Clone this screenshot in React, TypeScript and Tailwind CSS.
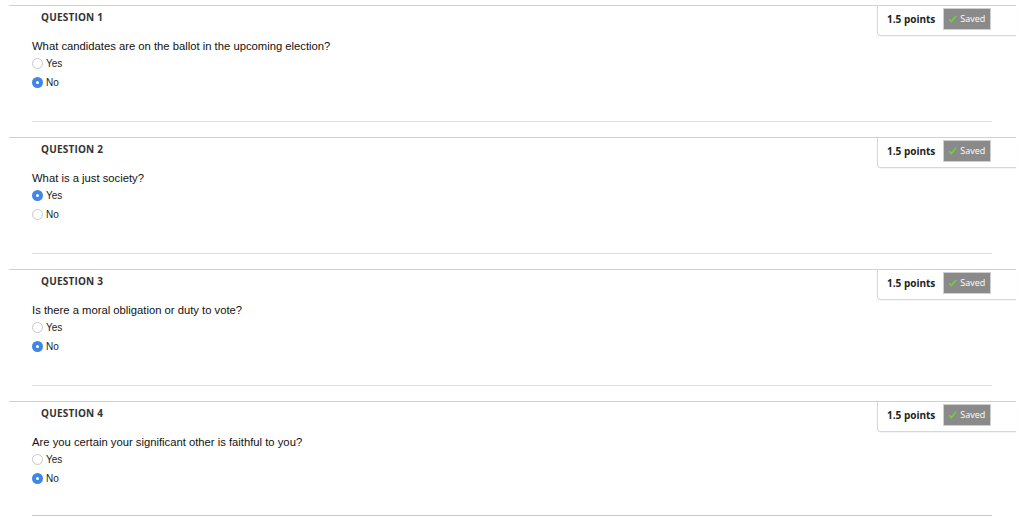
import React from "react";

interface Question {
  num: number;
  text: string;
  answer: "Yes" | "No";
}

const questions: Question[] = [
  { num: 1, text: "What candidates are on the ballot in the upcoming election?", answer: "No" },
  { num: 2, text: "What is a just society?", answer: "Yes" },
  { num: 3, text: "Is there a moral obligation or duty to vote?", answer: "No" },
  { num: 4, text: "Are you certain your significant other is faithful to you?", answer: "No" },
];

const Radio: React.FC<{ checked: boolean }> = ({ checked }) =>
  checked ? (
    <span className="w-[11px] h-[11px] rounded-full bg-[#3f86e8] flex items-center justify-center">
      <span className="w-[3px] h-[3px] rounded-full bg-white" />
    </span>
  ) : (
    <span className="w-[11px] h-[11px] rounded-full border border-[#c9c9c9] bg-white" />
  );

const Check = () => (
  <svg width="9" height="8" viewBox="0 0 9 8">
    <path d="M1 4.2 L3.3 6.5 L8 1" fill="none" stroke="#6fd13a" strokeWidth="1.6" />
  </svg>
);

const QuestionBlock: React.FC<{ q: Question; last?: boolean }> = ({ q, last }) => (
  <div className="border-t border-[#d0d0d0]">
    <div className="flex justify-between h-[30px]">
      <div
        className="pl-[32px] pt-[5px] text-[10px] leading-[12px] font-bold text-[#333] tracking-[0.2px]"
        style={{ fontFamily: '"Open Sans", sans-serif' }}
      >
        QUESTION {q.num}
      </div>
      <div className="w-[139px] h-[30px] border-l border-b border-[#d8d8d8] rounded-bl-[4px] flex items-center pl-[9px] gap-[8px] pb-[3px] shadow-[0_1px_1px_rgba(0,0,0,0.04)]">
        <span
          className="text-[10px] font-bold text-[#222]"
          style={{ fontFamily: '"Open Sans", sans-serif' }}
        >
          1.5 points
        </span>
        <span
          className="w-[48px] h-[22px] bg-[#8a8a8a] border border-[#cfcfcf] flex items-center gap-[3px] pl-[4px] text-[9px] text-white"
          style={{ fontFamily: '"Open Sans", sans-serif' }}
        >
          <Check />
          Saved
        </span>
      </div>
    </div>
    <div className="pl-[23px]" style={{ fontFamily: '"Liberation Sans", Arial, sans-serif' }}>
      <div className="mt-[3px] text-[11.25px] leading-[14px] text-[#111]">{q.text}</div>
      {(["Yes", "No"] as const).map((opt) => (
        <div key={opt} className="h-[19px] pt-[1px] flex items-center gap-[3px] text-[10px] text-[#222]">
          <Radio checked={q.answer === opt} />
          {opt}
        </div>
      ))}
    </div>
    <div
      className={
        last
          ? "mt-[28px] ml-[23px] mr-[24px] border-t border-[#c8c8c8]"
          : "mt-[30px] ml-[23px] mr-[24px] border-t border-[#e0e0e0] mb-[15px]"
      }
    />
  </div>
);

export default function App() {
  return (
    <div className="w-[1024px] h-[517px] overflow-hidden bg-white">
      <div className="pt-[5px] ml-[9px] mr-[8px]">
        {questions.map((q, i) => (
          <QuestionBlock key={q.num} q={q} last={i === questions.length - 1} />
        ))}
      </div>
    </div>
  );
}
